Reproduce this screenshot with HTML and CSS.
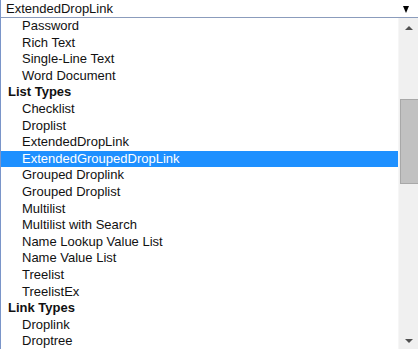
FILE: index.html
```html
<!DOCTYPE html>
<html lang="en">
<head>
  <meta charset="UTF-8" />
  <title>Field Type</title>
  <link rel="stylesheet" href="styles.css">
</head>
<body>

<div class="dropdown">
  <div class="select">
    <span class="select-value">ExtendedDropLink</span>
    <span class="select-arrow"></span>
  </div>
  <div class="list-wrap">
    <ul class="list">
      <li class="item">Password</li>
      <li class="item">Rich Text</li>
      <li class="item">Single-Line Text</li>
      <li class="item">Word Document</li>
      <li class="group">List Types</li>
      <li class="item">Checklist</li>
      <li class="item">Droplist</li>
      <li class="item">ExtendedDropLink</li>
      <li class="item selected">ExtendedGroupedDropLink</li>
      <li class="item">Grouped Droplink</li>
      <li class="item">Grouped Droplist</li>
      <li class="item">Multilist</li>
      <li class="item">Multilist with Search</li>
      <li class="item">Name Lookup Value List</li>
      <li class="item">Name Value List</li>
      <li class="item">Treelist</li>
      <li class="item">TreelistEx</li>
      <li class="group">Link Types</li>
      <li class="item">Droplink</li>
      <li class="item">Droptree</li>
    </ul>
    <div class="scrollbar">
      <div class="scroll-btn up"></div>
      <div class="track">
        <div class="thumb"></div>
      </div>
      <div class="scroll-btn down"></div>
    </div>
  </div>
</div>

</body>
</html>
```

FILE: styles.css
```css
html, body {
  margin: 0;
  padding: 0;
  height: 100%;
  overflow: hidden;
  background: #fff;
  font-family: "Liberation Sans", Arial, sans-serif;
  font-size: 13px;
  color: #111;
}

.dropdown {
  height: 100%;
  display: flex;
  flex-direction: column;
  border-left: 1px solid #7a95c9;
  box-sizing: border-box;
}

.select {
  height: 17px;
  display: flex;
  align-items: center;
  justify-content: space-between;
  padding: 0 9px 0 5px;
  border-bottom: 1px solid #8b9cbc;
  flex-shrink: 0;
}

.select-arrow {
  width: 0;
  height: 0;
  border-left: 3px solid transparent;
  border-right: 3px solid transparent;
  border-top: 7px solid #000;
  margin-top: 1px;
}

.list-wrap {
  flex: 1;
  display: flex;
  min-height: 0;
}

.list {
  flex: 1;
  list-style: none;
  margin: 0;
  padding: 0;
}

.list li {
  height: 16.6px;
  line-height: 16.6px;
  white-space: nowrap;
}

.item {
  padding-left: 21px;
}

.group {
  padding-left: 7px;
  font-weight: bold;
}

.selected {
  background: #1e90ff;
  color: #fff;
}

.scrollbar {
  width: 19px;
  background: #f0f0f0;
  display: flex;
  flex-direction: column;
  border-left: 1px solid #f6f6f6;
}

.scroll-btn {
  height: 17px;
  position: relative;
}

.scroll-btn::after {
  content: "";
  position: absolute;
  left: 6px;
  border-left: 4px solid transparent;
  border-right: 4px solid transparent;
}

.scroll-btn.up::after {
  top: 8px;
  border-bottom: 4px solid #505050;
}

.scroll-btn.down::after {
  bottom: 6px;
  border-top: 4px solid #505050;
}

.track {
  flex: 1;
  padding-top: 64px;
}

.thumb {
  margin-left: 1px;
  height: 85px;
  background: #c1c1c1;
  border: 1px solid #a8a8a8;
  border-right: none;
  box-sizing: border-box;
}
```
